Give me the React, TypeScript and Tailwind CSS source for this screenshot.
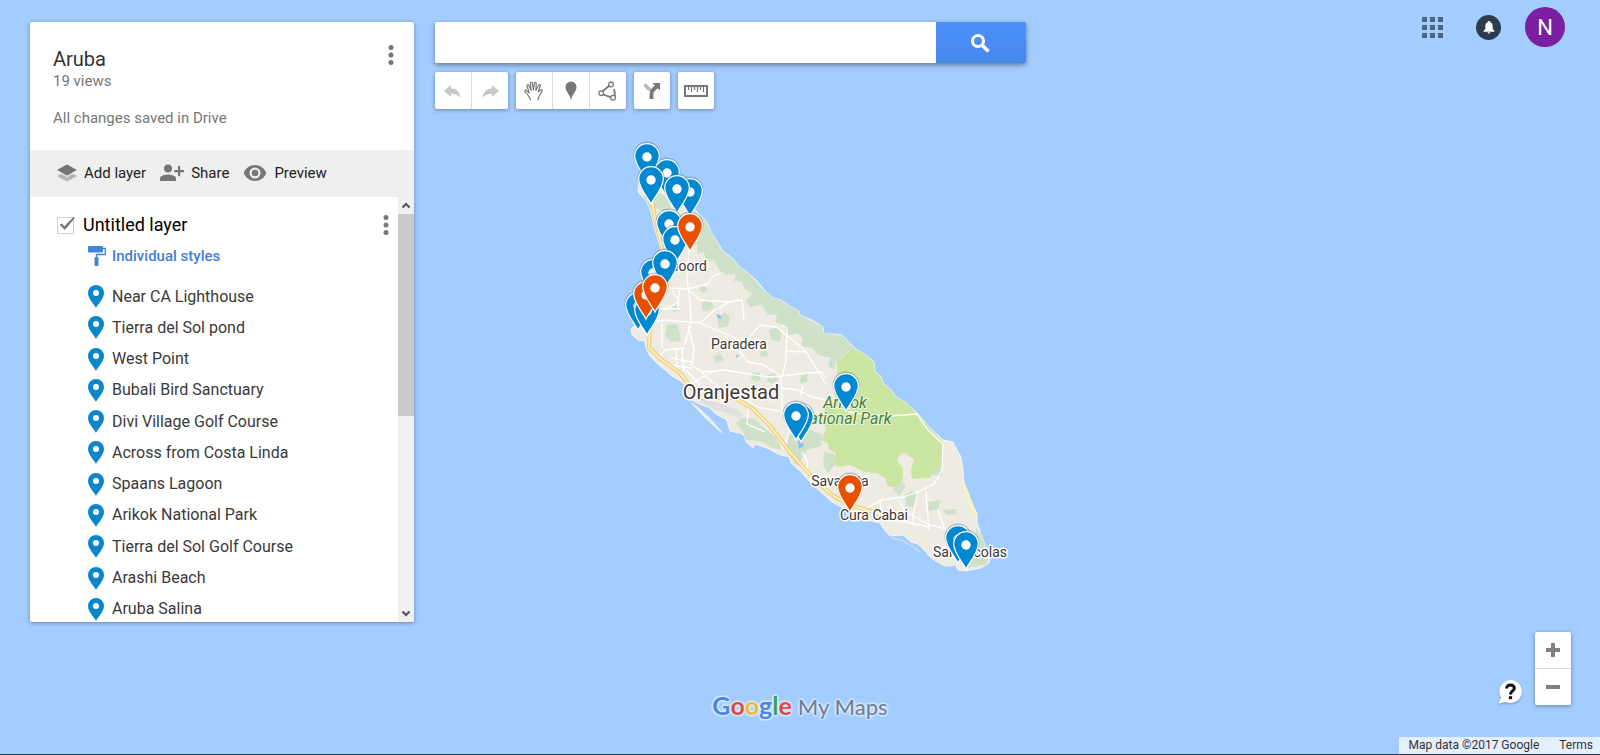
import React from 'react';

type PinData = { x: number; y: number; hot?: boolean };

const PINS: PinData[] = [
  { x: 647, y: 179 },
  { x: 667, y: 195 },
  { x: 651, y: 202 },
  { x: 690, y: 214 },
  { x: 677, y: 211 },
  { x: 669, y: 246 },
  { x: 675, y: 262 },
  { x: 690, y: 249, hot: true },
  { x: 653, y: 295 },
  { x: 665, y: 286 },
  { x: 638, y: 328 },
  { x: 647, y: 333 },
  { x: 646, y: 317, hot: true },
  { x: 655, y: 310, hot: true },
  { x: 801, y: 440 },
  { x: 796, y: 438 },
  { x: 846, y: 409 },
  { x: 850, y: 510, hot: true },
  { x: 958, y: 561 },
  { x: 966, y: 567 },
];

const PLACES = [
  'Near CA Lighthouse',
  'Tierra del Sol pond',
  'West Point',
  'Bubali Bird Sanctuary',
  'Divi Village Golf Course',
  'Across from Costa Linda',
  'Spaans Lagoon',
  'Arikok National Park',
  'Tierra del Sol Golf Course',
  'Arashi Beach',
  'Aruba Salina',
];

const ISLAND =
  'M640 176 L656 170 L672 178 L686 200 L700 215 L707 222 L711 232 L718 243 L722 250 L733 259 L740 267 L748 273 L756 280 L767 293 L773 298 L781 300 L790 306 L799 311 L800 315 L812 320 L823 327 L824 334 L833 334 L842 335 L847 340 L857 350 L866 355 L874 362 L875 371 L881 377 L883 383 L891 390 L895 396 L905 402 L917 413 L930 428 L943 440 L953 442 L957 450 L961 457 L963 470 L964 483 L968 492 L972 503 L977 514 L977 522 L981 535 L986 547 L990 556 L989 563 L981 568 L965 571 L958 570 L956 565 L945 566 L937 562 L930 557 L925 551 L918 544 L911 542 L903 535 L890 536 L883 528 L880 523 L862 519 L850 513 L843 508 L832 502 L823 494 L810 482 L800 471 L791 463 L789 457 L778 454 L767 448 L755 444 L753 448 L747 443 L743 434 L730 431 L727 420 L716 414 L710 408 L697 403 L688 397 L687 386 L679 380 L672 376 L660 366 L650 356 L646 348 L645 341 L638 340 L632 335 L631 329 L636 324 L642 312 L650 296 L657 278 L662 262 L660 246 L655 230 L651 212 L646 201 L638 192 Z';

const PARK =
  'M837 361 L843 357 L850 350 L857 350 L866 355 L874 362 L875 371 L881 377 L883 383 L891 390 L895 396 L905 402 L917 413 L930 428 L943 442 L942 467 L935 467 L930 478 L912 479 L911 470 L914 459 L908 456 L907 453 L900 454 L897 461 L903 468 L903 478 L897 488 L888 486 L885 478 L877 473 L864 472 L850 465 L837 467 L834 460 L836 453 L829 449 L828 443 L821 440 L826 430 L822 420 L826 405 L836 400 L833 390 L837 378 Z';

const BELT =
  'M700 215 L707 222 L711 232 L718 243 L722 250 L733 259 L748 273 L767 293 L781 300 L799 311 L800 315 L823 327 L824 334 L842 335 L857 350 L850 350 L837 361 L834 370 L828 366 L831 358 L818 355 L812 348 L801 346 L803 338 L797 333 L788 335 L784 326 L775 322 L777 314 L768 315 L762 305 L750 307 L746 300 L752 294 L745 289 L742 282 L734 281 L736 274 L727 275 L719 270 L714 260 L706 261 L704 252 L697 254 L697 244 L686 248 L684 225 Z';

const WOODS = [
  'M641 198 l14 -8 l14 10 l2 8 l-8 4 l-6 -4 l-10 2 Z',
  'M667 325 l10 -1 l2 6 l2 11 l-10 1 l-6 -6 Z',
  'M702 302 l9 -3 l3 8 l-8 5 l-4 -3 Z',
  'M717 318 l8 -6 l5 5 l-2 9 l-9 2 Z',
  'M672 306 l7 -2 l1 7 l-7 1 Z',
  'M769 330 l8 -3 l5 6 l-2 9 l-9 -2 Z',
  'M752 373 l7 -1 l2 8 l-6 2 l-4 -4 Z',
  'M768 375 l7 -2 l3 7 l-6 4 l-5 -3 Z',
  'M713 356 l8 -2 l3 6 l-8 3 Z',
  'M740 418 l14 1 l12 10 l10 9 l6 12 l-10 -2 l-12 -7 l-14 -1 l-4 -10 l-6 -6 Z',
  'M788 432 l16 -5 l18 8 l-1 11 l-14 4 l-6 10 l4 8 l-10 -4 l-8 -12 Z',
  'M801 375 l7 -1 l-1 8 l-7 1 Z',
  'M824 452 l10 2 l2 10 l-8 9 l-5 -8 Z',
  'M905 495 l8 -5 l4 6 l-3 11 l-8 -1 Z',
  'M928 502 l13 -2 l-3 9 l-9 2 Z',
  'M943 510 l14 -1 l-2 5 l-9 1 Z',
  'M976 527 l8 12 l5 17 l-2 8 l-20 4 l-2 -8 l10 -8 Z',
  'M893 489 l9 -9 l4 7 l-7 9 Z',
  'M932 466 l10 1 l0 9 l-10 -1 Z',
  'M760 352 l6 -2 l2 6 l-7 1 Z',
  'M702 285 l6 4 l-4 4 l-5 -3 Z',
];

const ROADS = [
  'M689 250 L687 280 L690 300 L691 324 L684 345',
  'M670 288 L687 289 L708 284 L713 276 L722 273',
  'M688 290 L700 300 L728 302 L742 300 L744 320',
  'M651 322 L664 320 L700 323 L730 336 L745 342 L760 325 L776 327 L794 341 L806 352 L816 368 L826 384',
  'M651 308 L680 309 M662 324 L662 348',
  'M679 290 L678 308 M700 323 L715 310 L730 302',
  'M672 290 L679 302 L664 310',
  'M684 348 L665 350 L658 358 M676 348 L677 372 M682 348 L684 372 M671 358 L692 362 M670 365 L692 368 M690 364 L702 372 L724 370 L768 377 L782 376',
  'M688 325 L694 350 L692 366 M725 336 L739 350 L748 362 L764 365 L780 375 L782 390 L782 415',
  'M782 325 L787 328 L786 360 L782 378',
  'M786 351 L805 352 M782 376 L806 373 L822 372 L826 378',
  'M782 388 L798 390 L812 397 L826 400 L838 408',
  'M803 386 L800 396 M702 373 L715 384 L740 397 L760 408 L780 411',
  'M690 385 L702 377 L715 371 M686 370 L700 385',
  'M748 410 L747 424 L765 432 M792 424 L785 445 M802 452 L808 462 L806 476',
  'M890 416 L917 414 L928 430 L943 444 L942 470 L934 484 L922 490 L904 497 L882 500 L866 508',
  'M918 491 L914 510 L912 525 M926 492 L929 530 M898 500 L906 512 L930 525 L960 532',
  'M880 500 L882 519 L900 521 L930 527 M890 504 L892 520 M938 510 L945 530',
  'M848 412 L870 415 L890 416',
];

const HIGHWAY =
  'M652 200 L655 220 L662 246 L665 262 L669 280 L660 300 L650 318 L649 348 L662 360 L680 373 L690 386 L702 398 L735 398 L752 408 L770 426 L790 452 L812 477 L832 495 L850 505 L880 514';

const LABEL = 'fill-[#3c3833] stroke-white stroke-[3px] [paint-order:stroke] [stroke-linejoin:round]';

function MapPin({ x, y, hot }: PinData) {
  return (
    <g transform={`translate(${x} ${y})`}>
      <path
        d="M0 1 C-1 -4 -13.500 -15 -13.500 -25 a13.500 13.500 0 0 1 27 0 C13.500 -15 1 -4 0 1 Z"
        fill="#4f759f"
        opacity="0.4"
      />
      <path
        d="M0 1 C-1.500 -3 -12.300 -15 -12.300 -24 a12.300 12.300 0 0 1 24.600 0 C12.300 -15 1.500 -3 0 1 Z"
        fill={hot ? '#e65100' : '#0288d1'}
        stroke="#fff"
        strokeWidth="1.200"
      />
      <circle cy="-23" r="4.700" fill="#fff" />
    </g>
  );
}

function IslandMap() {
  return (
    <svg
      className="absolute inset-0 h-full w-full font-[Roboto,sans-serif]"
      viewBox="0 0 1600 754"
      role="img"
      aria-label="Map of Aruba"
    >
      <defs>
        <clipPath id="island">
          <path d={ISLAND} />
        </clipPath>
      </defs>
      <path d="M689 401 L697 406 L711 419 L724 434 L719 431 L704 417 Z" fill="#eaf1f6" />
      <path d="M892 538 L903 541 L913 547 L920 552" stroke="#dce9f5" fill="none" />
      <path d={ISLAND} fill="#eeebe3" stroke="#f6f6f2" strokeWidth="1" />
      <g clipPath="url(#island)">
        <path d={BELT} fill="#cfe2c9" />
        {WOODS.map((d) => (
          <path key={d} d={d} fill="#cfe2c9" />
        ))}
        <path d={PARK} fill="#cbe6a2" />
        <path d="M697 399 L712 401 L738 410 L744 415 L738 417 L708 407 Z" fill="#dfdfdf" />
        <path d="M962 476 L968 490 L977 513 L973 516 L963 488 Z" fill="#f8f3bd" />
        <path d="M716 314 l4 1 l2 4 l-4 -1 Z M737 354 l2 2 l-3 2 Z M798 440 l4 2 l2 4 l-5 3 Z" fill="#8cbcf7" />
        <g fill="none" stroke="#fff" strokeWidth="1.300" strokeLinejoin="round">
          {ROADS.map((d) => (
            <path key={d} d={d} />
          ))}
        </g>
        <g fill="none" strokeLinejoin="round">
          <path d={HIGHWAY} stroke="#edca7c" strokeWidth="4" />
          <path d={HIGHWAY} stroke="#fff0b5" strokeWidth="2" />
        </g>
      </g>
      <g fontSize="14">
        <text x="707" y="271" textAnchor="end" className={LABEL}>Noord</text>
        <text x="739" y="349" textAnchor="middle" className={LABEL}>Paradera</text>
        <text x="840" y="486" textAnchor="middle" className={LABEL}>Savaneta</text>
        <text x="874" y="520" textAnchor="middle" className={LABEL}>Cura Cabai</text>
        <text x="970" y="557" textAnchor="middle" className={LABEL}>San Nicolas</text>
      </g>
      <text x="731" y="399" fontSize="20" textAnchor="middle" className={LABEL}>Oranjestad</text>
      <g
        fontSize="16"
        textAnchor="middle"
        className="fill-[#45813a] stroke-[#eef6df] stroke-2 italic [paint-order:stroke] [stroke-linejoin:round]"
      >
        <text x="845" y="408">Arikok</text>
        <text x="845" y="424">National Park</text>
      </g>
      {PINS.map((p) => (
        <MapPin key={`${p.x}-${p.y}`} x={p.x} y={p.y + 1} hot={p.hot} />
      ))}
    </svg>
  );
}

function Kebab() {
  return (
    <svg width="6" height="20" viewBox="0 0 6 20" fill="#777" aria-hidden="true">
      <circle cx="3" cy="2.500" r="2.500" />
      <circle cx="3" cy="10" r="2.500" />
      <circle cx="3" cy="17.500" r="2.500" />
    </svg>
  );
}

function PanelAction({ label, children }: { label: string; children: React.ReactNode }) {
  return (
    <button className="flex items-center gap-[7px] text-[15px] leading-5 text-[#222]">
      {children}
      {label}
    </button>
  );
}

function LayersIcon() {
  return (
    <svg width="20" height="18" viewBox="0 0 20 18" aria-hidden="true">
      <path d="M0 12 L10 7 L20 12 L10 17.500 Z" fill="#b5b5b5" />
      <path d="M0 7.500 L10 2 L20 7.500 L10 13.700 Z" fill="#fff" opacity="0.5" />
      <path d="M0 6 L10 0.500 L20 6 L10 11.500 Z" fill="#757575" />
    </svg>
  );
}

function ShareIcon() {
  return (
    <svg width="24" height="18" viewBox="0 0 24 18" fill="#777" aria-hidden="true">
      <circle cx="8" cy="4.500" r="4" />
      <path d="M0 17 v-2.500 C0 11.500 5 10.500 8 10.500 s8 1 8 4 V17 Z" />
      <path d="M18 2 h2.200 v4 H24 v2.200 h-3.800 v4 H18 v-4 h-3.800 V6 H18 Z" />
    </svg>
  );
}

function EyeIcon() {
  return (
    <svg width="24" height="24" viewBox="0 0 24 24" fill="#777" aria-hidden="true">
      <path d="M12 4C7 4 2.500 7.200.7 12c1.800 4.800 6.300 8 11.300 8s9.500-3.200 11.300-8C21.500 7.200 17 4 12 4zm0 13.500a5.500 5.500 0 1 1 0-11 5.500 5.500 0 0 1 0 11zm0-8.800a3.300 3.300 0 1 0 0 6.600 3.300 3.300 0 0 0 0-6.600z" />
    </svg>
  );
}

function RollerIcon() {
  return (
    <svg width="18" height="20" viewBox="0 0 18 20" aria-hidden="true">
      <rect x="0" y="0" width="15" height="6.500" rx="1" fill="#4285d6" />
      <path d="M15 2.500 h2.300 v6 H8.500 v3" fill="none" stroke="#4285d6" strokeWidth="1.300" />
      <rect x="6.500" y="11" width="4" height="9" rx="1" fill="#4285d6" />
    </svg>
  );
}

function ListPin() {
  return (
    <svg width="16" height="23" viewBox="0 0 16 23" className="shrink-0" aria-hidden="true">
      <path d="M8 23 C7 20 0 14 0 8 a8 8 0 0 1 16 0 C16 14 9 20 8 23 Z" fill="#0a86cb" />
      <circle cx="8" cy="8" r="3" fill="#fff" />
    </svg>
  );
}

function Panel() {
  return (
    <aside className="flex w-96 shrink-0 flex-col overflow-hidden rounded-[2px] bg-white shadow-[0_1px_4px_rgba(0,0,0,0.35)]">
      <header className="flex h-32 items-start justify-between pt-[23px] pr-5 pl-[23px]">
        <div>
          <h1 className="text-xl leading-7 text-[#333]">Aruba</h1>
          <p className="text-[15px] leading-4 text-[#777]">19 views</p>
          <p className="mt-[21px] text-[15px] leading-4 text-[#777]">All changes saved in Drive</p>
        </div>
        <button aria-label="Map options">
          <Kebab />
        </button>
      </header>
      <div className="flex h-[47px] items-center gap-[14px] bg-[#efefef] pb-0.5 pl-[27px]">
        <PanelAction label="Add layer">
          <LayersIcon />
        </PanelAction>
        <PanelAction label="Share">
          <ShareIcon />
        </PanelAction>
        <PanelAction label="Preview">
          <EyeIcon />
        </PanelAction>
      </div>
      <div className="flex h-[425px] overflow-hidden">
        <div className="grow">
          <div className="flex items-center pt-4 pr-[9px] pl-[27px]">
            <label className="flex grow items-center gap-[9px] text-lg leading-6 text-black">
              <span className="grid">
                <input
                  type="checkbox"
                  defaultChecked
                  className="peer col-start-1 row-start-1 size-[17px] appearance-none border border-[#d0d0d0] bg-white"
                />
                <svg
                  className="pointer-events-none invisible col-start-1 row-start-1 overflow-visible peer-checked:visible"
                  width="17"
                  height="17"
                  viewBox="0 0 17 17"
                  aria-hidden="true"
                >
                  <path d="M2.500 7.500 L5 6.500 L7.300 9.300 L16.500 0 L18 1 L7.800 13 Z" fill="#777" />
                </svg>
              </span>
              Untitled layer
            </label>
            <button aria-label="Layer options">
              <Kebab />
            </button>
          </div>
          <button className="mt-1 ml-[58px] flex items-center gap-[6px] text-[15px] leading-[30px] font-medium text-[#4480cf]">
            <RollerIcon />
            Individual styles
          </button>
          <ul className="mt-[10px] flex h-[344px] flex-col pl-[58px]">
            {PLACES.map((name) => (
              <li key={name} className="flex flex-1 items-center">
                <a href="#" className="flex items-center gap-2 text-base leading-6 text-[#3a3a3a]">
                  <ListPin />
                  {name}
                </a>
              </li>
            ))}
          </ul>
        </div>
        <div className="flex w-4 flex-col items-center bg-[#f0f0f0]" aria-hidden="true">
          <svg width="16" height="17" viewBox="0 0 16 17" fill="none" stroke="#505050" strokeWidth="2">
            <path d="M4.500 10.500 L8 7 L11.500 10.500" />
          </svg>
          <div className="h-[202px] w-4 bg-[#cbcbcb]" />
          <svg className="mt-auto" width="16" height="17" viewBox="0 0 16 17" fill="none" stroke="#505050" strokeWidth="2">
            <path d="M4.500 6.500 L8 10 L11.500 6.500" />
          </svg>
        </div>
      </div>
    </aside>
  );
}

function ToolGroup({ children }: { children: React.ReactNode }) {
  return (
    <div className="flex divide-x divide-[#dcdcdc] rounded-[2px] bg-white shadow-[0_1px_4px_rgba(0,0,0,0.35)]">
      {children}
    </div>
  );
}

function Tool({ label, disabled, children }: { label: string; disabled?: boolean; children: React.ReactNode }) {
  return (
    <button aria-label={label} disabled={disabled} className="box-content flex h-[37px] w-9 items-center justify-center">
      {children}
    </button>
  );
}

function Toolbar() {
  return (
    <div className="mt-[9px] flex gap-2">
      <ToolGroup>
        <Tool label="Undo" disabled>
          <svg width="18" height="14" viewBox="0 0 18 14" fill="#c8c8c8">
            <path d="M0 7 L7 1 V4.500 C12 4.500 16 7.500 16.500 14 C14 11 11 9.700 7 9.700 V13 Z" />
          </svg>
        </Tool>
        <Tool label="Redo" disabled>
          <svg width="18" height="14" viewBox="0 0 18 14" fill="#c8c8c8">
            <path d="M18 7 L11 1 V4.500 C6 4.500 2 7.500 1.500 14 C4 11 7 9.700 11 9.700 V13 Z" />
          </svg>
        </Tool>
      </ToolGroup>
      <ToolGroup>
        <Tool label="Select items">
          <svg width="20" height="20" viewBox="0 0 20 20" fill="none" stroke="#777" strokeWidth="1.150" strokeLinejoin="round" strokeLinecap="round">
            <path d="M6.500 19 C6.300 17 5 15.500 3.800 14 L.9 10.600 C.4 9.500 1.700 8.700 2.600 9.600 L5.200 12 L3 5 C2.700 3.700 4.300 3.200 4.800 4.400 L7.200 9.500 L6.300 2.400 C6.200 1 8 .8 8.300 2.100 L9.500 9 L10.300 2.200 C10.500 .9 12.300 1.100 12.200 2.500 L11.900 9.400 L14.600 4.200 C15.300 3.100 16.700 3.800 16.300 5 L14.200 11 L16.400 8.900 C17.400 8.100 18.600 9 18 10.100 L15.500 14.500 C14.700 16 14 17.200 14 19" />
          </svg>
        </Tool>
        <Tool label="Add marker">
          <svg width="12" height="20" viewBox="0 0 12 20" fill="#777">
            <path d="M6 19.500 C5.500 14 .5 10.500 .5 6 a5.500 5.500 0 0 1 11 0 C11.500 10.500 6.500 14 6 19.500 Z" />
          </svg>
        </Tool>
        <Tool label="Draw a line">
          <svg width="20" height="20" viewBox="0 0 20 20" fill="none" stroke="#777" strokeWidth="1.800">
            <path d="M11 5 L4.500 10.200 M5 13.500 L12.500 16.200 M16.800 14.800 C17.300 12 16.200 9.800 16 8.200" />
            <circle cx="13" cy="3.400" r="2.400" strokeWidth="1.300" />
            <circle cx="3.200" cy="12.200" r="2.300" strokeWidth="1.300" />
            <circle cx="15" cy="16.800" r="2.400" strokeWidth="1.300" />
          </svg>
        </Tool>
      </ToolGroup>
      <ToolGroup>
        <Tool label="Add directions">
          <svg width="18" height="18" viewBox="0 0 18 18">
            <path d="M1.500 2.500 L7.500 8.500" stroke="#b8b8b8" strokeWidth="3.600" />
            <path d="M8.500 17 V12 C8.500 8.500 10.500 7 14 4.500" fill="none" stroke="#777" strokeWidth="3.800" />
            <path d="M9.500 1 H17 V8.500 Z" fill="#777" />
          </svg>
        </Tool>
      </ToolGroup>
      <ToolGroup>
        <Tool label="Measure distances and areas">
          <svg width="24" height="12" viewBox="0 0 24 12" fill="none" stroke="#777">
            <rect x="1" y="1" width="22" height="10" strokeWidth="2" />
            <path d="M4.500 2 V5 M7.500 2 V7 M10.500 2 V5 M13.500 2 V7 M16.500 2 V5 M19.500 2 V7" strokeWidth="1.200" />
          </svg>
        </Tool>
      </ToolGroup>
    </div>
  );
}

function Search() {
  return (
    <form
      className="flex h-[41px] rounded-[2px] shadow-[0_2px_5px_rgba(0,0,0,0.4)]"
      onSubmit={(e) => e.preventDefault()}
    >
      <input aria-label="Search" className="min-w-0 grow rounded-l-[2px] bg-white px-3 text-base outline-none" />
      <button
        aria-label="Search the map"
        className="flex w-[90px] items-center justify-center rounded-r-[2px] bg-linear-to-b from-[#4d90fe] to-[#4787ed]"
      >
        <svg width="20" height="20" viewBox="0 0 20 20" fill="none" stroke="#fff">
          <circle cx="7" cy="8" r="5.500" strokeWidth="3" />
          <path d="M11 12 L17.500 18.500" strokeWidth="3.600" />
        </svg>
      </button>
    </form>
  );
}

function Account() {
  return (
    <nav className="flex h-10 items-center">
      <button aria-label="Apps">
        <svg width="21" height="21" viewBox="0 0 21 21" fill="#4c6585">
          {[0, 8, 16].map((y) => [0, 8, 16].map((x) => <rect key={`${x}-${y}`} x={x} y={y} width="5" height="5" />))}
        </svg>
      </button>
      <button aria-label="Notifications" className="ml-[33px] flex size-[25px] items-center justify-center rounded-full bg-[#2d3c4c]">
        <svg width="12" height="13" viewBox="0 0 12 13" fill="#fff">
          <path d="M6 0 C6.800 0 7.200 .5 7.200 1.200 C9 1.800 9.700 3.300 9.700 5 V8 L11.500 10 V10.700 H.5 V10 L2.300 8 V5 C2.300 3.300 3 1.800 4.800 1.200 C4.800 .5 5.200 0 6 0 Z M4.600 11.300 H7.400 C7.400 13 4.600 13 4.600 11.300 Z" />
        </svg>
      </button>
      <button aria-label="Account" className="ml-6 size-10 rounded-full bg-[#7b1fa2] text-[22px] text-white">
        N
      </button>
    </nav>
  );
}

function ZoomControls() {
  return (
    <div className="flex items-end gap-3">
      <button aria-label="Help">
        <svg width="26" height="26" viewBox="0 0 26 26" className="drop-shadow-[0_1px_1px_rgba(0,0,0,0.3)]">
          <path d="M13.500 1 a11.500 11.500 0 1 1 -5 21.900 L1.500 24.500 L4 18.500 A11.500 11.500 0 0 1 13.500 1 Z" fill="#fff" />
          <path d="M9.500 9.500 C9.500 4.800 17.300 4.900 17.300 9.200 C17.300 12 13.500 12 13.500 15.500" fill="none" stroke="#111" strokeWidth="3" />
          <rect x="11.900" y="17.200" width="3.200" height="3" fill="#111" />
        </svg>
      </button>
      <div className="flex w-9 flex-col divide-y divide-[#dedede] rounded-[2px] bg-white shadow-[0_1px_4px_rgba(0,0,0,0.35)]">
        <button aria-label="Zoom in" className="flex h-[37px] items-center justify-center">
          <svg width="14" height="14" viewBox="0 0 14 14" fill="#808080">
            <path d="M5 0 H9 V5 H14 V9 H9 V14 H5 V9 H0 V5 H5 Z" />
          </svg>
        </button>
        <button aria-label="Zoom out" className="flex h-9 items-center justify-center">
          <svg width="14" height="4" viewBox="0 0 14 4" fill="#808080">
            <rect width="14" height="4" />
          </svg>
        </button>
      </div>
    </div>
  );
}

function Logo() {
  return (
    <div className="flex items-baseline gap-[6px] font-[Lato,sans-serif] text-[25px] leading-8 [text-shadow:0_0_2px_#e4f0ff,0_0_2px_#e4f0ff,0_0_3px_#e4f0ff,0_0_3px_#e4f0ff,0_0_3px_#e4f0ff]">
      <span className="font-bold">
        <span className="text-[#4a86e0]">G</span>
        <span className="text-[#dc4a40]">o</span>
        <span className="text-[#e9bb38]">o</span>
        <span className="text-[#4a86e0]">g</span>
        <span className="text-[#3a9e5c]">l</span>
        <span className="text-[#dc4a40]">e</span>
      </span>
      <span className="text-[22px] font-medium text-[#6d829c]">My Maps</span>
    </div>
  );
}

export default function App() {
  return (
    <div className="relative flex min-h-screen flex-col overflow-hidden border-b border-[#24365a] bg-[#a3ccff] font-[Roboto,sans-serif]">
      <IslandMap />
      <main className="relative flex grow justify-between pl-[30px]">
        <div className="flex grow items-start gap-[21px] pt-[22px]">
          <Panel />
          <div className="max-w-[591px] grow">
            <Search />
            <Toolbar />
          </div>
        </div>
        <div className="flex flex-col items-end justify-between pt-[7px] pr-[29px] pb-8">
          <div className="pr-[6px]">
            <Account />
          </div>
          <ZoomControls />
        </div>
      </main>
      <div className="absolute inset-x-0 bottom-[31px] flex justify-center">
        <Logo />
      </div>
      <footer className="relative flex h-[17px] shrink-0 justify-end text-xs leading-[17px] text-[#333]">
        <div className="flex gap-5 bg-[#e6f0fd] pr-[7px] pl-[10px]">
          <span>Map data ©2017 Google</span>
          <a href="#">Terms</a>
        </div>
      </footer>
    </div>
  );
}
